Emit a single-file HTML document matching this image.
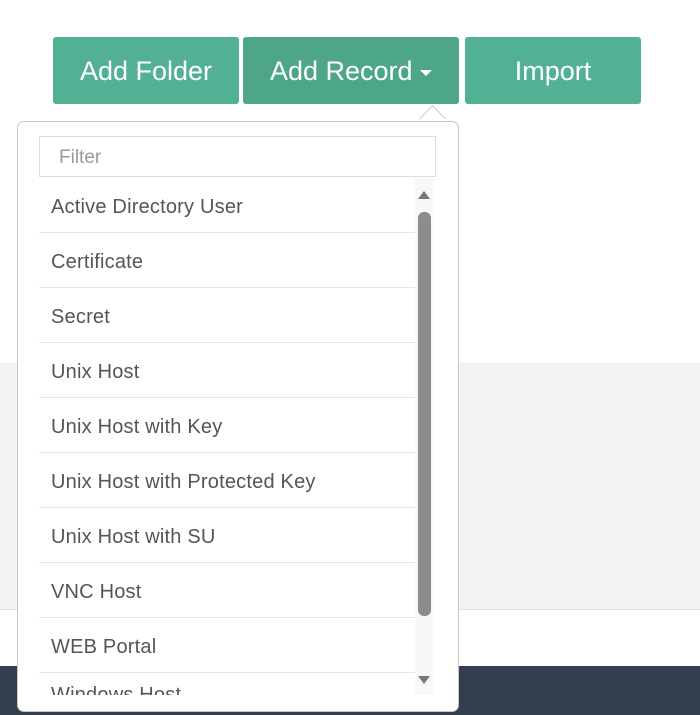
<!DOCTYPE html>
<html><head><style>
body{margin:0;width:700px;height:715px;position:relative;overflow:hidden;background:#fff;font-family:"Liberation Sans",sans-serif}
.g{position:absolute;left:0;top:363px;width:700px;height:246px;background:#f2f2f2;border-bottom:1px solid #e4e4e4}
.d{position:absolute;left:0;top:666px;width:700px;height:49px;background:#333f4e}
.b{position:absolute;top:37px;height:67px;background:#52b095;color:#fff;font-size:27px;line-height:69px;text-align:center;border-radius:3px}
.dd{position:absolute;left:17px;top:121px;width:440px;height:589px;background:#fff;border:1px solid #c8c8c8;border-radius:7px}
.ar{position:absolute;left:423px;top:109px;width:18px;height:18px;background:#fff;border-left:1px solid #c8c8c8;border-top:1px solid #c8c8c8;transform:rotate(45deg)}
.f{position:absolute;left:21px;top:14px;width:397px;height:41px;border:1px solid #ddd;box-sizing:border-box;font-size:19px;color:#999;padding:10px 0 0 19px}
.l{position:absolute;left:21px;top:56px;width:376px;height:517px;overflow:hidden}
.i{height:54px;border-bottom:1px solid #e6e6ea;font-size:20px;letter-spacing:0.2px;color:#555;line-height:58px;padding-left:12px}
.sb{position:absolute;left:397px;top:56px;width:18px;height:517px;background:#f8f8f8}
.th{position:absolute;left:3px;top:34px;width:13px;height:404px;background:#8c8c8c;border-radius:6px}
</style></head><body>
<div class="g"></div><div class="d"></div>
<div class="b" style="left:53px;width:186px">Add Folder</div>
<div class="b" style="left:243px;width:216px;background:#4da68a">Add Record <span style="display:inline-block;border-left:6px solid transparent;border-right:6px solid transparent;border-top:6px solid #fff;vertical-align:middle"></span></div>
<div class="b" style="left:465px;width:176px">Import</div>
<div class="ar"></div>
<div class="dd">
<div class="f">Filter</div>
<div class="l">
<div class="i">Active Directory User</div>
<div class="i">Certificate</div>
<div class="i">Secret</div>
<div class="i">Unix Host</div>
<div class="i">Unix Host with Key</div>
<div class="i">Unix Host with Protected Key</div>
<div class="i">Unix Host with SU</div>
<div class="i">VNC Host</div>
<div class="i">WEB Portal</div>
<div class="i" style="line-height:44px">Windows Host</div>
</div>
<div class="sb">
<div style="position:absolute;left:3px;top:13px;border-left:6px solid transparent;border-right:6px solid transparent;border-bottom:8px solid #777"></div>
<div class="th"></div>
<div style="position:absolute;left:3px;top:498px;border-left:6px solid transparent;border-right:6px solid transparent;border-top:8px solid #777"></div>
</div>
</div>
</body></html>
